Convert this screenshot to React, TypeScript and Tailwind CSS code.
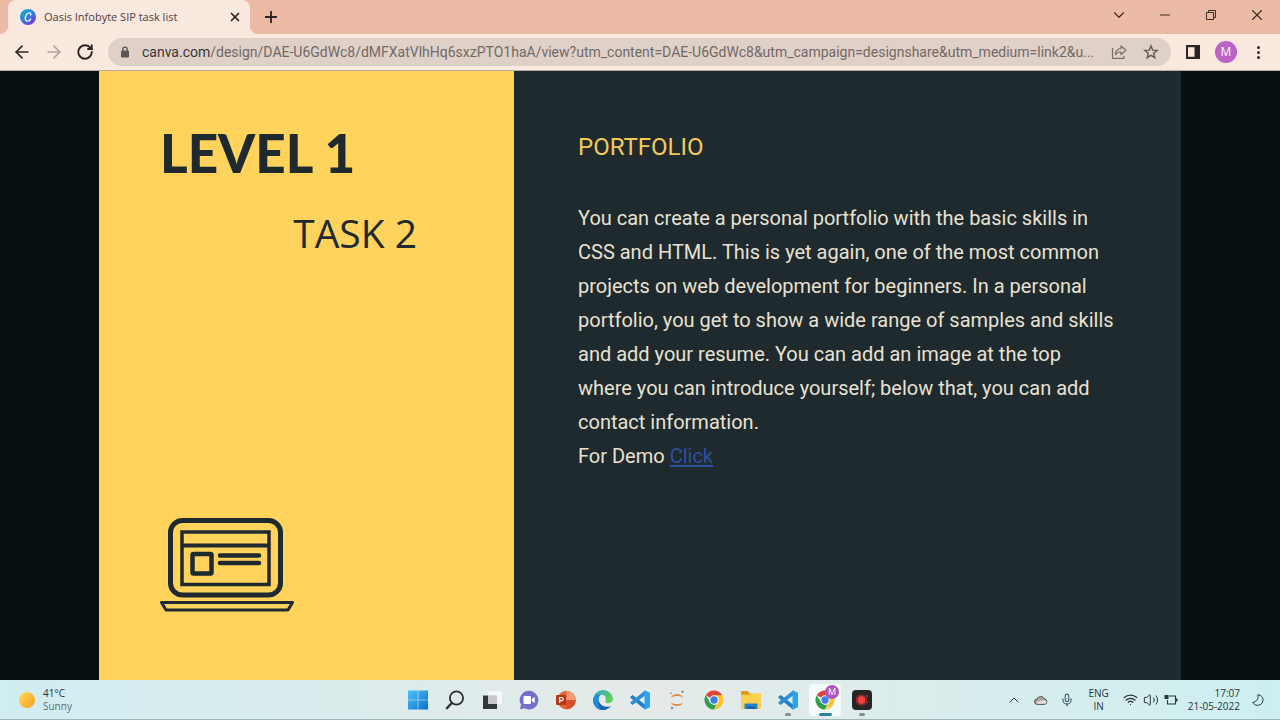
import React from 'react';
import {
  ArrowLeft,
  ArrowRight,
  ChevronDown,
  ChevronUp,
  Mic,
  Minus,
  Plus,
  RotateCw,
  Volume2,
  Wifi,
  X,
} from 'lucide-react';

const PAGE_PATH =
  '/design/DAE-U6GdWc8/dMFXatVlhHq6sxzPTO1haA/view?utm_content=DAE-U6GdWc8&utm_campaign=designshare&utm_medium=link2&u...';

const DESCRIPTION = [
  'You can create a personal portfolio with the basic skills in',
  'CSS and HTML. This is yet again, one of the most common',
  'projects on web development for beginners. In a personal',
  'portfolio, you get to show a wide range of samples and skills',
  'and add your resume. You can add an image at the top',
  'where you can introduce yourself; below that, you can add',
  'contact information.',
];

const CanvaLogo = () => (
  <svg width="16" height="16" viewBox="0 0 16 16">
    <defs>
      <linearGradient id="canva" x1="0" y1="0" x2="0.7" y2="1">
        <stop offset="0" stopColor="#12b5cb" />
        <stop offset="0.5" stopColor="#2b86d9" />
        <stop offset="1" stopColor="#7b35dd" />
      </linearGradient>
    </defs>
    <circle cx="8" cy="8" r="8" fill="url(#canva)" />
    <path
      d="M10.6 5.9c.5-1 .1-2-1.1-2C7.200 3.900 5.300 6.600 5.300 9.200c0 1.800.9 2.900 2.300 2.900 1.300 0 2.400-.8 3.100-2"
      fill="none"
      stroke="#e9f6ff"
      strokeWidth="1.400"
      strokeLinecap="round"
    />
  </svg>
);

const LockIcon = () => (
  <svg width="10" height="12" viewBox="0 0 10 12">
    <path d="M2.800 5V3.300a2.200 2.200 0 0 1 4.400 0V5" fill="none" stroke="#5b5654" strokeWidth="1.300" />
    <rect x="1" y="4.600" width="8" height="6.800" rx="1" fill="#5b5654" />
  </svg>
);

const ShareIcon = () => (
  <svg width="16" height="16" viewBox="0 0 16 16" fill="none" stroke="#76706d" strokeWidth="1.200" strokeLinejoin="round">
    <path d="M1.500 4v10.300h11.500V12" />
    <path d="M10 2 15 6.300l-5 4.200V8c-2.600 0-4.500.8-5.700 2.700.3-3.300 2.400-5.900 5.700-6.200z" />
  </svg>
);

const StarIcon = () => (
  <svg width="16" height="16" viewBox="0 0 16 16" fill="none" stroke="#5f5a58" strokeWidth="1.400" strokeLinejoin="miter">
    <path d="m8 1.900 1.700 4.200 4.500.3-3.500 2.900 1.100 4.400L8 11.300l-3.800 2.400 1.100-4.400-3.500-2.900 4.500-.3z" />
  </svg>
);

const SidePanelIcon = () => (
  <svg width="16" height="16" viewBox="0 0 16 16">
    <path d="M1 1h14v14H1z" fill="#2a2523" />
    <path d="M3 3.200h6.500v9.600H3z" fill="#fbe9e0" />
  </svg>
);

const RestoreIcon = () => (
  <svg width="12" height="12" viewBox="0 0 12 12" fill="none" stroke="#3a2a25" strokeWidth="1">
    <path d="M1.500 3.500h7v7h-7z" />
    <path d="M3.500 3.500v-2h7v7h-2" />
  </svg>
);

const LaptopDrawing = () => (
  <svg width="134" height="94" viewBox="0 0 134 94" fill="none" stroke="#1e2a2e">
    <rect x="10.500" y="2.500" width="110" height="74.500" rx="12" strokeWidth="5" />
    <rect x="22" y="14" width="87" height="52.500" strokeWidth="3.500" />
    <path d="M22 27.500h87" strokeWidth="4" />
    <rect x="32.500" y="36" width="19" height="19.500" rx="1" strokeWidth="4.500" />
    <path d="M60 37.500h39M60 45h39" strokeWidth="4.500" strokeLinecap="round" />
    <path d="M1.500 84.500h131l-4.500 7.500H6z" strokeWidth="3" strokeLinejoin="round" />
  </svg>
);

const WindowsIcon = () => (
  <svg width="20" height="20" viewBox="0 0 20 20">
    <defs>
      <linearGradient id="win" x1="0" y1="0" x2="1" y2="1">
        <stop offset="0" stopColor="#4fc4f5" />
        <stop offset="1" stopColor="#0a6fcf" />
      </linearGradient>
    </defs>
    <path d="M0 .5h9.700v9.200H0zM10.300.5H20v9.200h-9.700zM0 10.300h9.700v9.200H0zM10.300 10.300H20v9.200h-9.700z" fill="url(#win)" />
  </svg>
);

const SearchIcon = () => (
  <svg width="20" height="20" viewBox="0 0 20 20" fill="none" stroke="#2b3033" strokeLinecap="round">
    <circle cx="11.500" cy="8" r="6.600" strokeWidth="1.800" />
    <path d="m6.500 13.200-4.600 5" strokeWidth="2.400" />
  </svg>
);

const TaskViewIcon = () => (
  <svg width="20" height="20" viewBox="0 0 20 20">
    <path d="M1 5.500h14V19H1z" fill="#34373a" />
    <path d="M6 1h14v13H6z" fill="#f8f8f8" fillOpacity="0.850" />
    <path d="M6 5.500h9V14H6z" fill="#c9c9cb" />
  </svg>
);

const ChatIcon = () => (
  <svg width="20" height="20" viewBox="0 0 20 20">
    <path d="M10 .8a9.300 9.300 0 1 1-4.500 17.400L1 19.300l1-4.500A9.300 9.300 0 0 1 10 .8z" fill="#7471c8" />
    <rect x="4.500" y="6" width="7.500" height="8" rx="1.200" fill="#fff" />
    <path d="m12.800 9 2.900-2v6l-2.900-2z" fill="#fff" />
  </svg>
);

const PowerPointIcon = () => (
  <svg width="20" height="20" viewBox="0 0 20 20">
    <circle cx="10.500" cy="10" r="9.300" fill="#e2613a" />
    <path d="M10.500.7a9.300 9.300 0 0 1 9.300 9.300h-9.300z" fill="#f59a75" />
    <path d="M10.500 10h9.300a9.300 9.300 0 0 1-9.300 9.300z" fill="#d2502b" />
    <rect x="0" y="5" width="10" height="10" rx="1" fill="#b7371a" />
    <path d="M3.700 12.700V7.500h2a1.500 1.500 0 0 1 0 3.100h-2" fill="none" stroke="#fff" strokeWidth="1.200" />
  </svg>
);

const EdgeIcon = () => (
  <svg width="20" height="20" viewBox="0 0 20 20">
    <defs>
      <linearGradient id="edgeTop" x1="0" y1="0" x2="1" y2="0.600">
        <stop offset="0" stopColor="#2aa7dc" />
        <stop offset="1" stopColor="#62cf58" />
      </linearGradient>
    </defs>
    <path d="M10 0a10 10 0 0 0-9.900 9C1.500 5.500 5 4 8.500 4.600c3.800.6 5 3.400 4 5.600-.8 1.700 0 3 3 3 2.700 0 4.500-1.700 4.500-4.400C19.500 3.500 15 0 10 0z" fill="url(#edgeTop)" />
    <path d="M.1 9c1-3.500 4.500-5 8.400-4.400-3 .7-4 4-2.300 7.600 1.700 3.500 5.800 5.500 11.800 4A10 10 0 0 1 .1 9z" fill="#1565b5" />
    <path d="M8.500 4.600C4 3.800.9 6 .1 9c-.3 5 3 9.500 7.400 10.600C4 14 4.500 6.500 8.500 4.600z" fill="#1e8bdc" />
  </svg>
);

const VsCodeIcon = () => (
  <svg width="20" height="20" viewBox="0 0 20 20">
    <path d="M.4 6.800 2.600 5 15 14.500v5L.4 7.800z" fill="#2180c8" />
    <path d="M.4 13.200 2.600 15 15 5.500v-5L.4 12.200z" fill="#2f8fd6" />
    <path d="M14.500.2 20 2.800v14.400l-5.500 2.600z" fill="#29a5ee" />
  </svg>
);

const JupyterIcon = () => (
  <svg width="18" height="20" viewBox="0 0 18 20">
    <path d="M3 7.500C4.500 2.800 13.500 2.800 15 7.500 12 5.400 6 5.400 3 7.500zM3 12.500c1.500 4.700 10.500 4.700 12 0-3 2.100-9 2.100-12 0z" fill="#e88a45" />
    <circle cx="3" cy="3.200" r="0.800" fill="#6b6f73" />
    <circle cx="14.500" cy="1.800" r="1.100" fill="#6b6f73" />
    <circle cx="4" cy="18" r="1.300" fill="#8b8f92" />
  </svg>
);

const ChromeIcon = () => (
  <svg width="20" height="20" viewBox="0 0 20 20">
    <path d="M10 10 1.800 5.300A9.400 9.400 0 0 1 18.200 5.300z" fill="#de4335" />
    <path d="M10 10V5.300h8.200A9.400 9.400 0 0 1 10 19.400l4-7z" fill="#fbc52d" />
    <path d="m6 12.300 4 2.400 2.300-.5L10 19.400A9.400 9.400 0 0 1 1.800 5.300z" fill="#2f9f4d" />
    <circle cx="10" cy="10" r="4.700" fill="#fff" />
    <circle cx="10" cy="10" r="3.700" fill="#3f7fe8" />
  </svg>
);

const FolderIcon = () => (
  <svg width="20" height="20" viewBox="0 0 20 20">
    <path d="M0 2.200C0 1.500.5 1 1.200 1h5.300l2 2.300H10V8H0z" fill="#dd9b1c" />
    <path d="M0 4.800h8l1.600-1.600H19c.6 0 1 .4 1 1V18c0 .6-.4 1-1 1H1c-.6 0-1-.4-1-1z" fill="#fcd04f" />
    <path d="M3.500 14.500c0-.6.400-1 1-1h11c.6 0 1 .4 1 1V19h-13z" fill="#2382cc" />
    <path d="M6 16.500h8V19H6z" fill="#1562a5" />
  </svg>
);

const RecorderIcon = () => (
  <svg width="20" height="20" viewBox="0 0 20 20">
    <rect width="20" height="20" rx="4" fill="#252527" />
    <circle cx="9.500" cy="10" r="5.200" fill="none" stroke="#a32a26" strokeWidth="1.200" />
    <circle cx="9.500" cy="10" r="3.900" fill="#f0423a" />
    <circle cx="15" cy="6" r="0.800" fill="#f0423a" />
    <circle cx="15.500" cy="12.500" r="0.700" fill="#d33a33" />
  </svg>
);

const CloudIcon = () => (
  <svg width="14" height="10" viewBox="0 0 14 10">
    <path d="M3.300 9.300a2.600 2.600 0 0 1-.3-5.200A4 4 0 0 1 10.400 4a2.700 2.700 0 0 1 .4 5.300z" fill="#b3a9a8" stroke="#3f474a" strokeWidth="1" />
    <path d="M2.500 8.300c2-2.300 4-3 9-2.800a1.700 1.700 0 0 1-.5 3.200H3.200z" fill="#e6e4e3" />
  </svg>
);

const BatteryIcon = () => (
  <svg width="14" height="12" viewBox="0 0 14 12">
    <path d="M5 2h6.500v8h-8V6" fill="none" stroke="#29363a" strokeWidth="1.100" />
    <path d="M12 4.500h1.500v3H12zM.5 1h4v4h-4z" fill="#29363a" />
  </svg>
);

const MoonIcon = () => (
  <svg width="12" height="12" viewBox="0 0 12 12" fill="none" stroke="#29363a" strokeWidth="1" strokeLinejoin="round">
    <path d="M5.800.7c3.300.3 5.500 2.700 5.200 5.800-.3 2.900-2.600 4.900-5.500 4.800C3.300 11.200 1.600 10 .8 8.300 4.500 8 6.900 4.800 5.800.7z" />
  </svg>
);

const TASKBAR_APPS = [
  { name: 'Start', icon: <WindowsIcon /> },
  { name: 'Search', icon: <SearchIcon /> },
  { name: 'Task view', icon: <TaskViewIcon /> },
  { name: 'Chat', icon: <ChatIcon /> },
  { name: 'PowerPoint', icon: <PowerPointIcon /> },
  { name: 'Edge', icon: <EdgeIcon /> },
  { name: 'Visual Studio Code', icon: <VsCodeIcon /> },
  { name: 'Jupyter', icon: <JupyterIcon /> },
  { name: 'Chrome', icon: <ChromeIcon /> },
  { name: 'File Explorer', icon: <FolderIcon /> },
  { name: 'Visual Studio Code window', icon: <VsCodeIcon />, open: true },
  { name: 'Chrome window', icon: <ChromeIcon />, active: true },
  { name: 'Recorder', icon: <RecorderIcon />, open: true },
];

const TabStrip: React.FC = () => (
  <div className="flex h-[34px] items-stretch bg-[#ebbba5] pl-2 text-[#3a2a25]">
    <div className="relative flex w-[242px] items-center rounded-t-lg bg-[#fbe8df] pr-1 pl-3">
      {/* flared bottom corners of the open tab */}
      <span className="absolute bottom-0 -left-2 size-2 rounded-br-lg shadow-[3px_3px_0_#fbe8df]" />
      <span className="absolute -right-2 bottom-0 size-2 rounded-bl-lg shadow-[-3px_3px_0_#fbe8df]" />
      <CanvaLogo />
      <span className="ml-2 flex-1 truncate text-[11px] text-[#4a403c]">Oasis Infobyte SIP task list</span>
      <button type="button" aria-label="Close tab" className="p-1 text-[#2a2523]">
        <X size={14} strokeWidth={3} />
      </button>
    </div>
    <button type="button" aria-label="New tab" className="px-3 text-[#2a2523]">
      <Plus size={18} strokeWidth={2.500} />
    </button>
    <div className="ml-auto flex items-center pb-1">
      <button type="button" aria-label="Search tabs" className="flex w-[46px] justify-center">
        <ChevronDown size={18} strokeWidth={1.500} />
      </button>
      <button type="button" aria-label="Minimize" className="flex w-[46px] justify-center">
        <Minus size={16} strokeWidth={1.500} />
      </button>
      <button type="button" aria-label="Restore" className="flex w-[46px] justify-center">
        <RestoreIcon />
      </button>
      <button type="button" aria-label="Close" className="flex w-[46px] justify-center">
        <X size={18} strokeWidth={1.500} />
      </button>
    </div>
  </div>
);

const Toolbar: React.FC = () => (
  <div className="flex h-[37px] items-center border-b border-[#b9aca5] bg-[#fbe8df] pr-[19px] pl-3">
    <div className="flex items-center gap-3">
      <button type="button" aria-label="Back" className="text-[#2a2523]">
        <ArrowLeft size={20} strokeWidth={2} />
      </button>
      <button type="button" aria-label="Forward" className="text-[#b3a49d]">
        <ArrowRight size={20} strokeWidth={2} />
      </button>
      <button type="button" aria-label="Reload" className="text-[#2a2523]">
        <RotateCw size={18} strokeWidth={2.500} />
      </button>
    </div>
    <div className="ml-[14px] flex h-7 min-w-0 flex-1 items-center rounded-full bg-[#dfd0c8] px-3 font-[Roboto] text-sm">
      <LockIcon />
      <label htmlFor="address" className="ml-3 text-[#3a3634]">canva.com</label>
      <input
        id="address"
        type="text"
        readOnly
        value={PAGE_PATH}
        className="min-w-0 flex-1 bg-transparent text-[#716a67] outline-none"
      />
      <button type="button" aria-label="Share" className="ml-2">
        <ShareIcon />
      </button>
      <button type="button" aria-label="Bookmark" className="ml-4">
        <StarIcon />
      </button>
    </div>
    <button type="button" aria-label="Side panel" className="ml-[14px]">
      <SidePanelIcon />
    </button>
    <button type="button" aria-label="Profile" className="ml-[14px] size-[22px] rounded-full bg-[#b963c4] text-xs text-white">
      M
    </button>
    <button type="button" aria-label="Menu" className="ml-[18px] flex w-[6px] flex-col items-center gap-[2px]">
      <span className="size-[3px] rounded-full bg-[#2a2523]" />
      <span className="size-[3px] rounded-full bg-[#2a2523]" />
      <span className="size-[3px] rounded-full bg-[#2a2523]" />
    </button>
  </div>
);

const Slide: React.FC = () => (
  <main className="grid flex-1 grid-cols-[99fr_415fr_667fr_99fr] bg-[#071012]">
    <div />
    <section className="flex flex-col bg-[#ffd35c] px-[61px] pt-[50px] pb-[68px] text-[#1e2a2e]">
      <h1 className="font-[Lato] text-[53px] leading-[64px] font-black whitespace-nowrap">LEVEL 1</h1>
      <p className="mt-5 pr-9 text-right font-['Open_Sans'] text-[39px] leading-[56px] whitespace-nowrap">TASK 2</p>
      <div className="mt-auto">
        <LaptopDrawing />
      </div>
    </section>
    <section className="bg-[#1e2a2e] pt-[60px] pr-10 pl-16 font-[Roboto] text-[#e8e1d3]">
      <h2 className="text-2xl leading-8 text-[#f3ca55]">PORTFOLIO</h2>
      <p className="mt-[38px] text-xl leading-[34px] whitespace-nowrap">
        {DESCRIPTION.map((line) => (
          <React.Fragment key={line}>
            {line}
            <br />
          </React.Fragment>
        ))}
        For Demo{' '}
        <a href="#demo" className="text-[#2f4f9f] underline decoration-2 underline-offset-2">Click</a>
      </p>
    </section>
    <div />
  </main>
);

const Taskbar: React.FC = () => (
  <footer className="grid h-10 grid-cols-[1fr_auto_1fr] items-center border-b border-[#9fb9bb] bg-linear-to-r from-[#d0edf1] via-[#e5eae9] to-[#cdeff1] text-[10px] leading-[13px] text-[#263438]">
    <div className="flex items-center gap-2 pl-[19px]">
      <span className="size-4 rounded-full bg-linear-to-br from-[#ffdc5a] to-[#f79a12]" />
      <div>
        <p>41°C</p>
        <p className="text-[#5d6c70]">Sunny</p>
      </div>
    </div>
    <nav className="flex items-center gap-[5px]">
      {TASKBAR_APPS.map((app) => (
        <button
          key={app.name}
          type="button"
          aria-label={app.name}
          className={`relative flex h-8 w-8 items-center justify-center rounded ${app.active ? 'bg-[#f5fafa]' : ''}`}
        >
          {app.icon}
          {app.active && (
            <>
              <span className="absolute top-px right-0.5 size-[14px] rounded-full bg-[#b054bd] text-[9px] leading-[14px] text-white">M</span>
              <span className="absolute bottom-0 h-[3px] w-[13px] rounded-full bg-[#2a8496]" />
            </>
          )}
          {app.open && <span className="absolute bottom-0 h-[3px] w-[6px] rounded-full bg-[#858e91]" />}
        </button>
      ))}
    </nav>
    <div className="flex items-center justify-end pr-4">
      <ChevronUp size={16} strokeWidth={1.500} />
      <span className="ml-3"><CloudIcon /></span>
      <Mic size={14} strokeWidth={2} className="ml-3 text-[#43646f]" />
      <p className="ml-[14px] text-center">ENG<br />IN</p>
      <Wifi size={15} strokeWidth={2} className="ml-[14px]" />
      <Volume2 size={16} strokeWidth={1.500} className="ml-[5px]" />
      <span className="ml-[5px]"><BatteryIcon /></span>
      <p className="ml-[10px] text-right">17:07<br />21-05-2022</p>
      <span className="ml-3"><MoonIcon /></span>
    </div>
  </footer>
);

export default function App() {
  return (
    <div className="flex min-h-screen flex-col font-['Open_Sans',sans-serif]">
      <header>
        <TabStrip />
        <Toolbar />
      </header>
      <Slide />
      <Taskbar />
    </div>
  );
}
